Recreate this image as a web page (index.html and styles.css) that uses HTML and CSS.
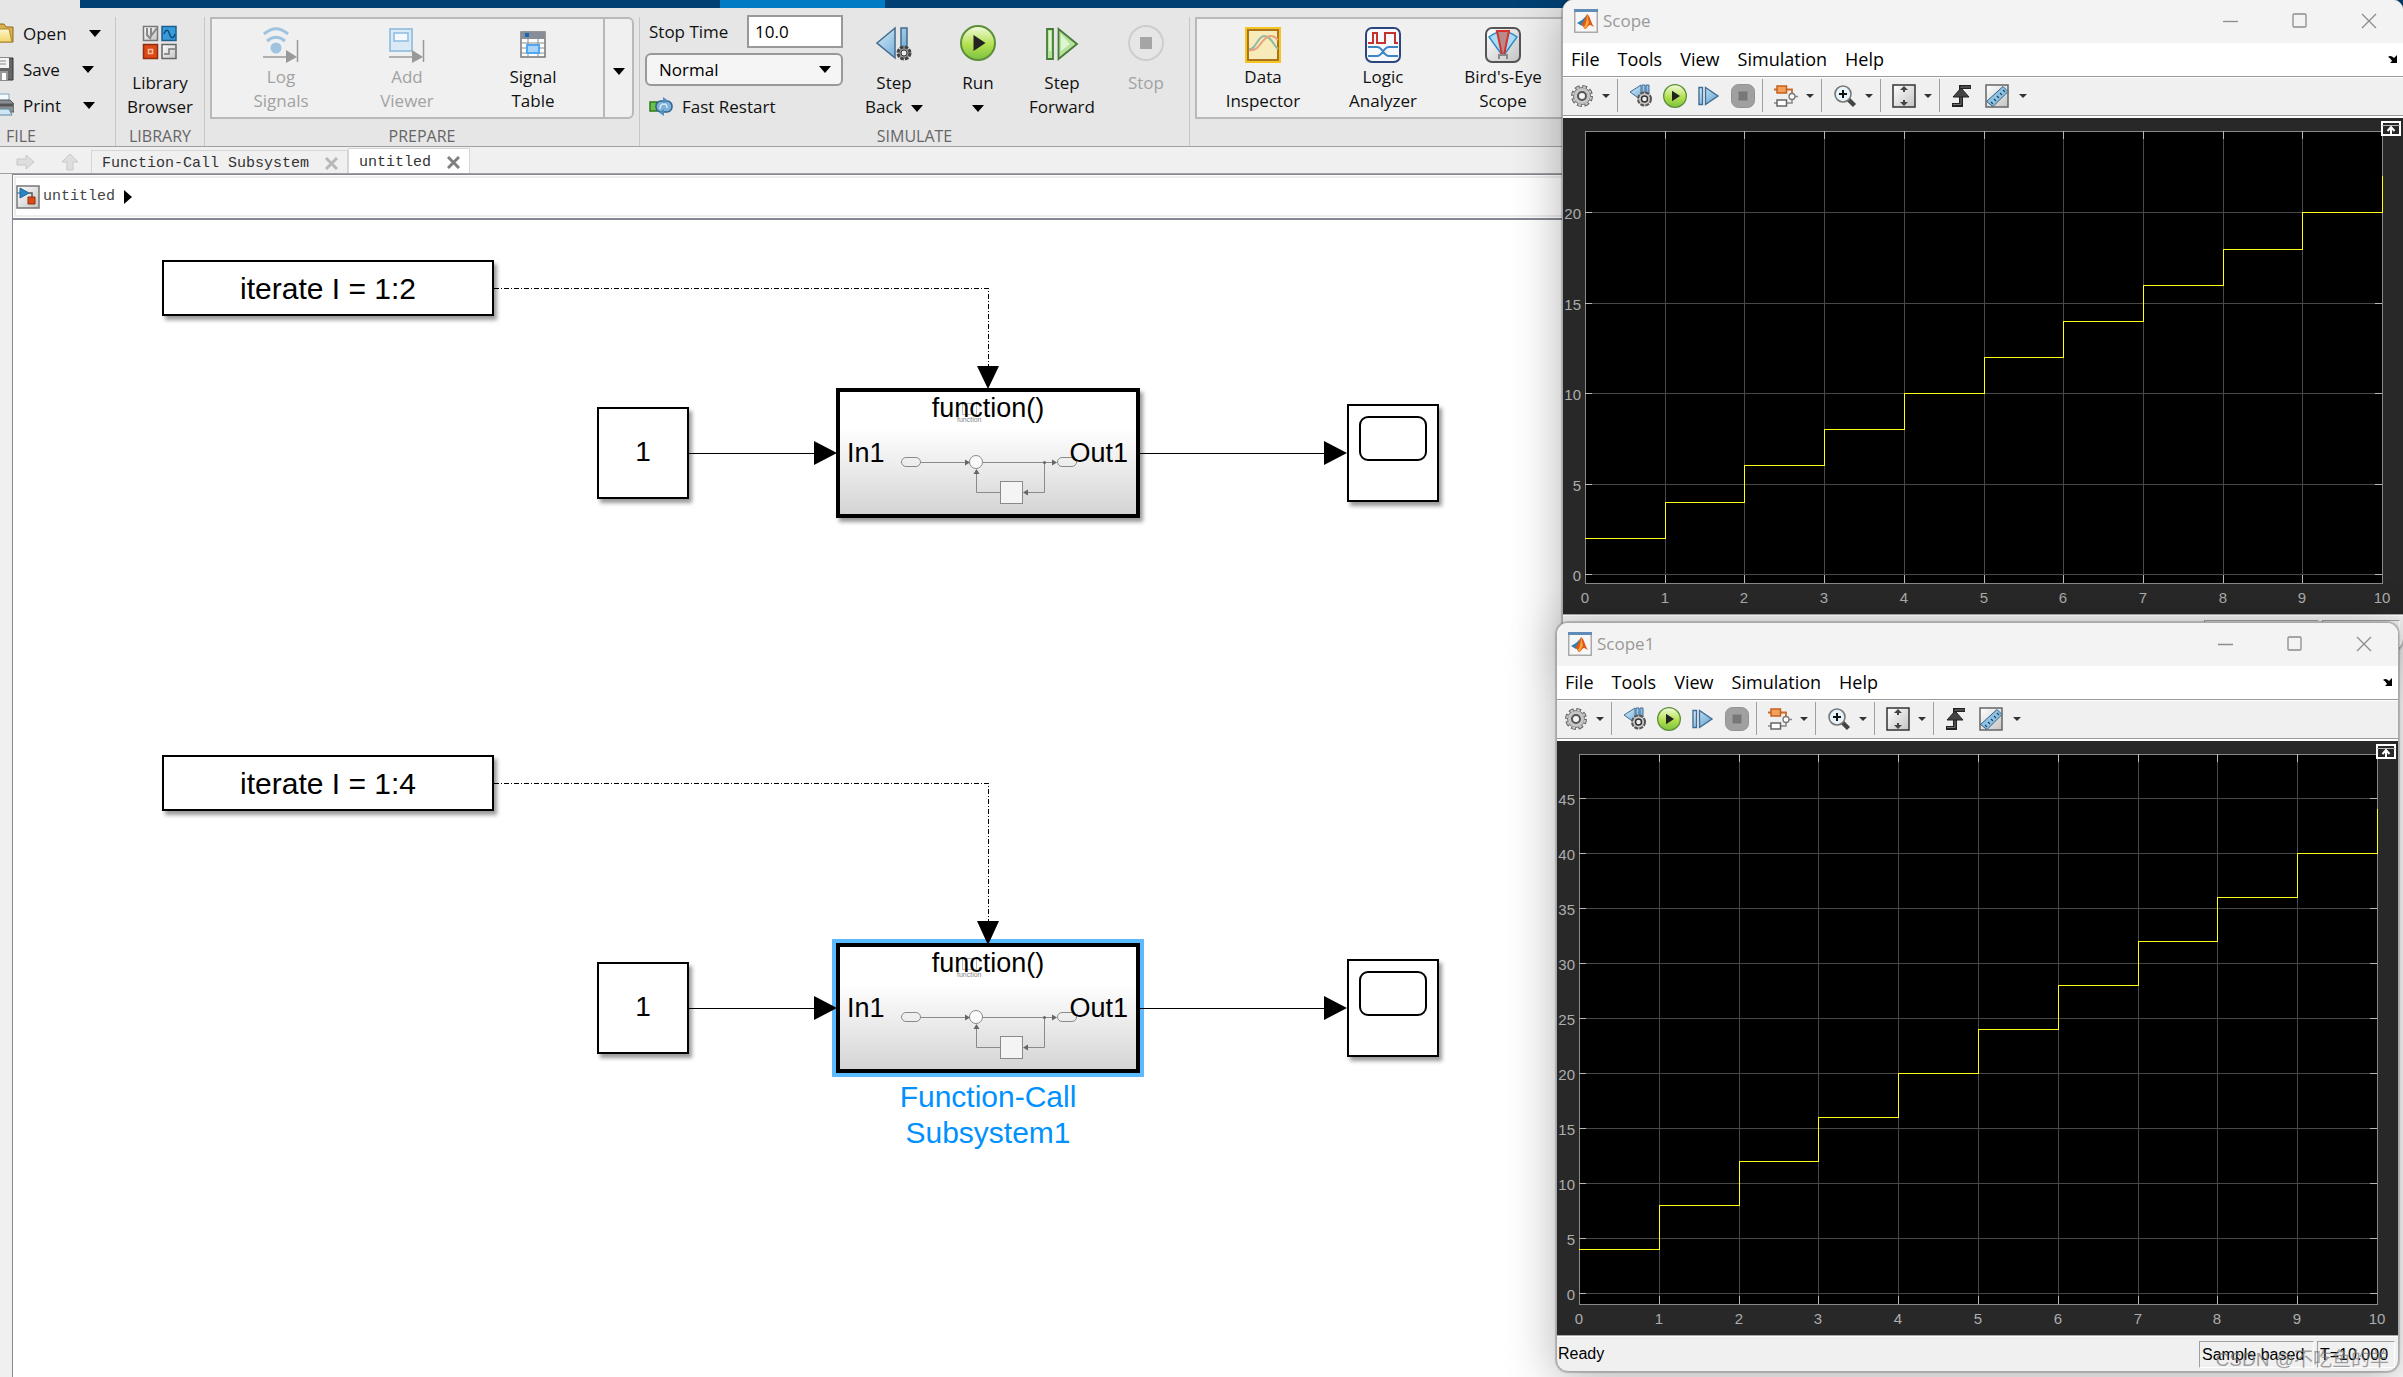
FILE: index.html
```html
<!DOCTYPE html>
<html lang="en">
<head>
    <meta charset="UTF-8">
    <meta name="viewport" content="width=device-width, initial-scale=1.0">
    <title>untitled - Simulink</title>
    <link rel="stylesheet" href="styles.css">
</head>
<body>
    <!-- Shared icons -->
    <svg class="icon-defs" width="0" height="0" aria-hidden="true">
        <defs>
            <linearGradient id="g-green" x1="0" y1="0" x2="0" y2="1"><stop offset="0" stop-color="#f2fbe0"/><stop offset=".55" stop-color="#b4e04e"/><stop offset="1" stop-color="#7cc242"/></linearGradient>
            <linearGradient id="g-blue" x1="0" y1="0" x2="1" y2="1"><stop offset="0" stop-color="#d6ecfa"/><stop offset="1" stop-color="#5b9fd0"/></linearGradient>
            <linearGradient id="g-grey" x1="0" y1="0" x2="1" y2="1"><stop offset="0" stop-color="#ffffff"/><stop offset="1" stop-color="#c4c4c4"/></linearGradient>
            <linearGradient id="g-folder" x1="0" y1="0" x2="0" y2="1"><stop offset="0" stop-color="#fff7cf"/><stop offset="1" stop-color="#f3d466"/></linearGradient>
            <symbol id="gear" viewBox="0 0 24 24">
                <circle cx="12" cy="12" r="9.5" fill="none" stroke="#666" stroke-width="3" stroke-dasharray="4.86 2.6"/>
                <circle cx="12" cy="12" r="8.5" fill="#c6c6c6" stroke="#777"/>
                <circle cx="12" cy="12" r="9" fill="none" stroke="#c6c6c6" stroke-width="2" stroke-dasharray="2.6 4.47" stroke-dashoffset="-1"/>
                <circle cx="12" cy="12" r="4" fill="#f4f4f4" stroke="#555" stroke-width="2"/>
            </symbol>
            <symbol id="step-back-small" viewBox="0 0 24 24">
                <path d="M1 8 12 1v15zM13 1h3v10h-3zM17 1h3v9h-3z" fill="url(#g-blue)" stroke="#3f6d94"/>
                <circle cx="15.5" cy="15" r="6.5" fill="#c9c9c9" stroke="#555" stroke-width="2" stroke-dasharray="4 1.1"/>
                <circle cx="15.5" cy="15" r="3" fill="#eee" stroke="#333" stroke-width="1.5"/>
            </symbol>
            <symbol id="run" viewBox="0 0 36 36">
                <circle cx="18" cy="18" r="17" fill="url(#g-green)" stroke="#5d8f3a" stroke-width="2"/>
                <path d="M13.5 10v16l12-8z" fill="#222"/>
            </symbol>
            <symbol id="step-forward-small" viewBox="0 0 24 24">
                <path d="M2 3.5h3.5v17H2zM8.500 3.5v17L21 12z" fill="url(#g-blue)" stroke="#3f6d94" stroke-width="1.4"/>
            </symbol>
            <symbol id="stop-small" viewBox="0 0 24 24">
                <rect x=".5" y=".5" width="23" height="23" rx="7" fill="#a0a0a0" stroke="#929292"/>
                <rect x="7.5" y="7.5" width="9" height="9" fill="#777"/>
            </symbol>
            <symbol id="highlight" viewBox="0 0 24 24">
                <path d="M0 5.5h3M13 5.5h5V9" fill="none" stroke="#c96a2b" stroke-width="1.8"/>
                <path d="M0 19h3M13 19h5v-4M21 12.5h3" fill="none" stroke="#888" stroke-width="1.5"/>
                <rect x="3" y="2" width="9.5" height="7" fill="#f2a15c" stroke="#c65f1c" stroke-width="1.5"/>
                <rect x="3" y="16" width="9.5" height="6" fill="#fff" stroke="#666" stroke-width="1.5"/>
                <circle cx="18" cy="12.5" r="3" fill="#fff" stroke="#777" stroke-width="1.3"/>
            </symbol>
            <symbol id="zoom" viewBox="0 0 24 24">
                <path d="m15 15 6.5 6.5" stroke="#444" stroke-width="4.5"/>
                <circle cx="10" cy="10" r="8" fill="#e8f4fb" stroke="#777" stroke-width="1.6"/>
                <path d="M10 6v8M6 10h8" stroke="#111" stroke-width="2"/>
            </symbol>
            <symbol id="fit" viewBox="0 0 24 24">
                <rect x="1" y="1" width="22" height="22" fill="url(#g-grey)" stroke="#333" stroke-width="1.5"/>
                <path d="M12 3v5M12 21v-5" stroke="#444" stroke-width="2"/>
                <path d="m8 6 4-4 4 4zM8 18l4 4 4-4z" fill="#444"/>
            </symbol>
            <symbol id="trigger" viewBox="0 0 24 24">
                <path d="M1 21h9V3h10" fill="none" stroke="#222" stroke-width="4"/>
                <path d="M2 20.5h8V3h9.5" fill="none" stroke="#777"/>
                <path d="m2 13 8-9 8 9z" fill="#444" stroke="#222"/>
            </symbol>
            <symbol id="measure" viewBox="0 0 24 24">
                <rect x="1" y="1" width="22" height="22" fill="url(#g-grey)" stroke="#666" stroke-width="1.5"/>
                <path d="M1.5 17.5 18 2.500l5 5L8 22.500z" fill="#8ec3e6" stroke="#36607f"/>
                <path d="m8 20-2-2m5-1-2-2m5-1-2-2m5-1-2-2m5-1-2-2" stroke="#23465f" stroke-width="1.2"/>
            </symbol>
            <symbol id="matlab" viewBox="0 0 24 24">
                <rect x=".75" y=".75" width="22.5" height="22.5" fill="#f7f7f7" stroke="#a9a9a9" stroke-width="1.5"/>
                <path d="M0 0h24v3H0z" fill="#5f8db8"/>
                <path d="m3 14 5-3 5-5-3 10-2 1z" fill="#2a7fb8"/>
                <path d="M13 5c-2 4-3 8-6 10 2 1 3 5 4 5 2 0 3-4 5-4 1 0 2 1 4 2-3-4-4-12-7-13z" fill="#e0561c"/>
                <path d="M13 5c0 5-1 10-3 13l1 2c2-2 3-5 4-6-1-3-1-7-2-9z" fill="#f3a932"/>
            </symbol>
            <symbol id="popout" viewBox="0 0 12 10">
                <path d="M1 3c2-2 4-1 6 1l3-3v8H3l2-2C4 5 3 4 1 3z" fill="#000"/>
            </symbol>
            <symbol id="maximize-axes" viewBox="0 0 20 15">
                <path d="M1 1h18v13H1z" fill="#282828" stroke="#fff" stroke-width="2"/>
                <path d="M1 4.5h18" stroke="#bbb"/>
                <path d="M10 13V7M6.500 10 10 6l3.500 4" fill="none" stroke="#fff" stroke-width="2"/>
            </symbol>
            <!-- Preview of the subsystem contents -->
            <symbol id="subsystem-preview" viewBox="0 0 304 130">
                <g fill="none" stroke="#8a8a8a">
                    <rect x="126.5" y="15.5" width="14" height="11" stroke="#bbb"/>
                    <rect x="65.5" y="69.5" width="19" height="9" rx="4.5"/>
                    <rect x="221.5" y="69.5" width="19" height="9" rx="4.5"/>
                    <circle cx="140" cy="74" r="6.5" fill="#fafafa"/>
                    <path d="M85 74.5h49M147 74.5h70M208.5 74v30.5H190M164 104.5h-23.5V85"/>
                    <rect x="164.5" y="93.5" width="22" height="22" fill="#f4f4f4"/>
                </g>
                <path d="M129 71.5v6l5-3zM216 71.5v6l5-3zM192 101.5v6l-5-3zM137.5 86h6l-3-5z" fill="#666"/>
                <circle cx="208.5" cy="74.5" r="1.5" fill="#666"/>
            </symbol>
        </defs>
    </svg>

    <header class="ribbon">
        <div class="ribbon-tabs"><span class="ribbon-tab-active"></span></div>
        <div class="ribbon-groups">
            <section class="group group-file">
                <div class="group-body file-list">
                    <button class="file-button">
                        <svg width="14" height="24" viewBox="10 0 14 24"><path d="M0 3h14l2 3h7v15H0z" fill="#d9b04a" stroke="#8f6b20"/><path d="M-4 8h23l3 13H0z" fill="url(#g-folder)" stroke="#a98732"/></svg>
                        Open <span class="caret"></span>
                    </button>
                    <button class="file-button">
                        <svg width="14" height="24" viewBox="10 0 14 24"><path d="M0 1h23v22H0z" fill="#666" stroke="#333"/><path d="M2 1h17v10H2z" fill="#f4f4f4"/><path d="M4 4h12M4 7h12" stroke="#888"/><path d="M4 14h14v9H4z" fill="#999"/><path d="M12 16h4v7h-4z" fill="#fff"/></svg>
                        Save <span class="caret"></span>
                    </button>
                    <button class="file-button">
                        <svg width="14" height="24" viewBox="10 0 14 24"><path d="M4 1h15v8H4z" fill="#f3f9fd" stroke="#7fa6c2"/><path d="M0 7h20l4 4v8H0z" fill="#8b8f94" stroke="#555"/><path d="M0 12h23" stroke="#555" stroke-width="3"/><path d="M4 16h15l3 6H0z" fill="#cfe5f4" stroke="#5c86a5"/></svg>
                        Print <span class="caret"></span>
                    </button>
                </div>
                <h2>FILE</h2>
            </section>

            <section class="group group-library">
                <div class="group-body">
                    <button class="tool">
                        <svg width="36" height="36" viewBox="0 0 36 36">
                            <g stroke-width="1.5">
                                <rect x="1.500" y="1.5" width="14" height="14" fill="url(#g-grey)" stroke="#777"/>
                                <rect x="20" y="1.5" width="14" height="14" fill="#3a9bdb" stroke="#1c5f8f"/>
                                <rect x="1.500" y="19.5" width="14" height="14" fill="#dd4a17" stroke="#8f2e0c"/>
                                <rect x="20" y="19.5" width="14" height="14" fill="url(#g-grey)" stroke="#666"/>
                            </g>
                            <path d="M5 3v7l4 4M9 3v8l6-8" fill="none" stroke="#888" stroke-width="2"/>
                            <path d="M22 9c2-5 4-5 5.500 0s4 5 5.500 0" fill="none" stroke="#0c4f7d" stroke-width="1.5"/>
                            <path d="M6.500 24.5h4v4h-4z" fill="none" stroke="#fbbf9d" stroke-width="1.5"/>
                            <path d="M22 29h5v-5h6" fill="none" stroke="#777" stroke-width="1.5"/>
                        </svg>
                        <span>Library<br>Browser</span>
                    </button>
                </div>
                <h2>LIBRARY</h2>
            </section>

            <section class="group group-prepare">
                <div class="group-body">
                    <div class="gallery">
                        <button class="tool" disabled>
                            <svg width="36" height="36" viewBox="0 0 36 36"><path d="M1 7c8-7 16-7 24 0M4 14c6-5 12-5 18 0" fill="none" stroke="#9fc4e0" stroke-width="3"/><circle cx="13" cy="21" r="5.5" fill="#9fc4e0"/><path d="M0 30h28M34.5 13v22" stroke="#999" stroke-width="1.5"/><path d="m23 23 11 7-11 6z" fill="#999"/></svg>
                            <span>Log<br>Signals</span>
                        </button>
                        <button class="tool" disabled>
                            <svg width="36" height="36" viewBox="0 0 36 36"><path d="M1 2h22v22H1z" fill="#d9e9f5" stroke="#9fc4e0" stroke-width="2"/><path d="M5 6h14v8H5z" fill="#f4f9fd" stroke="#8dbce0" stroke-width="1.5"/><path d="M0 30h28M34.5 13v22" stroke="#999" stroke-width="1.5"/><path d="m23 23 11 7-11 6z" fill="#999"/></svg>
                            <span>Add<br>Viewer</span>
                        </button>
                        <button class="tool">
                            <svg width="36" height="36" viewBox="0 0 36 36"><path d="M6 5h24v25H6z" fill="#fff" stroke="#777" stroke-width="1.5"/><path d="M6 5h24v7H6z" fill="#888e98"/><path d="M6 16h24M6 21h24M6 26h24M13 12v18M23 12v18" stroke="#888"/><path d="M10 6h4v4h-4z" fill="#1767b8"/><path d="M12 18h12v8H12z" fill="#a8d4fa" stroke="#52a6ef" stroke-width="2"/></svg>
                            <span>Signal<br>Table</span>
                        </button>
                        <button class="gallery-more" aria-label="More"><span class="caret"></span></button>
                    </div>
                </div>
                <h2>PREPARE</h2>
            </section>

            <section class="group group-simulate">
                <div class="group-body simulate-body">
                    <div class="sim-settings">
                        <div class="stop-time"><label for="stop-time">Stop Time</label><input id="stop-time" type="text" value="10.0"></div>
                        <div class="mode-select">
                            <select aria-label="Simulation mode"><option>Normal</option></select>
                            <span class="caret"></span>
                        </div>
                        <button class="fast-restart">
                            <svg width="24" height="20" viewBox="0 0 24 20"><path d="M1 5h7v9H1z" fill="#6cc04a" stroke="#2f7a1c" stroke-width="1.5"/><rect x="7" y="4" width="16" height="11" rx="5" fill="#7fb0d8" stroke="#2f628e" stroke-width="1.5"/><path d="M14 0v7l5-3.500zM15 12v7l-5-3.500z" fill="#4f8fc2"/><path d="M11 12c0-4 2-5 4-5s3 1 3 4" fill="none" stroke="#d7eaf8" stroke-width="1.5"/></svg>
                            Fast Restart
                        </button>
                    </div>
                    <button class="tool">
                        <svg width="36" height="36" viewBox="0 0 36 36"><path d="M1 18 19 3v30zM25 3h6v21h-6z" fill="url(#g-blue)" stroke="#44698a" stroke-width="1.5"/><circle cx="28" cy="28" r="6" fill="#999" stroke="#444" stroke-width="3" stroke-dasharray="3.5 1.2"/><circle cx="28" cy="28" r="3" fill="#eee" stroke="#333"/></svg>
                        <span>Step<br>Back <i class="caret caret-inline"></i></span>
                    </button>
                    <button class="tool">
                        <svg width="36" height="36"><use href="#run"/></svg>
                        <span>Run<br><i class="caret caret-below"></i></span>
                    </button>
                    <button class="tool">
                        <svg width="36" height="36" viewBox="0 0 36 36"><path d="M3 4h6v30H3zM14.5 4v30L33 19z" fill="#b5e29a" stroke="#477a39" stroke-width="1.8"/><path d="M5 6h2v20H5zM17 9v17l9-7z" fill="#dff5d2"/></svg>
                        <span>Step<br>Forward</span>
                    </button>
                    <button class="tool" disabled>
                        <svg width="36" height="36" viewBox="0 0 36 36"><circle cx="18" cy="18" r="17" fill="#e6e6e6" stroke="#cdcdcd" stroke-width="2"/><path d="M12 12h12v12H12z" fill="#a5a5a5"/></svg>
                        <span>Stop</span>
                    </button>
                </div>
                <h2>SIMULATE</h2>
            </section>

            <section class="group group-review">
                <div class="group-body">
                    <div class="gallery">
                        <button class="tool">
                            <svg width="36" height="36" viewBox="0 0 36 36"><path d="M1 1h34v34H1z" fill="#f7ebba" stroke="#f7c523" stroke-width="2"/><path d="M3 3h30v30H3z" fill="none" stroke="#a9741f" stroke-width="2"/><path d="M4 22c6 2 9-13 15-13 7 0 9 9 14 13" fill="none" stroke="#8fb9a5" stroke-width="2"/><path d="M4 23c12 2 12-14 22-14 4 0 5 2 7 4" fill="none" stroke="#e8a27c" stroke-width="2"/></svg>
                            <span>Data<br>Inspector</span>
                        </button>
                        <button class="tool">
                            <svg width="36" height="36" viewBox="0 0 36 36"><rect x="1" y="1" width="34" height="34" rx="6" fill="#f7f9fc" stroke="#2c477f" stroke-width="2"/><path d="M3 16h5V6h4v10h8V6h10v10h3" fill="none" stroke="#c8322c" stroke-width="2"/><path d="M3 20h9c6 0 6 9 12 9h9M3 29h9c6 0 6-9 12-9h9" fill="none" stroke="#3c84c4" stroke-width="2"/></svg>
                            <span>Logic<br>Analyzer</span>
                        </button>
                        <button class="tool">
                            <svg width="36" height="36" viewBox="0 0 36 36"><rect x="1" y="1" width="34" height="34" rx="6" fill="url(#g-grey)" stroke="#555" stroke-width="2"/><path d="M4 10c9-7 19-7 28 0L19 28h-2z" fill="#a9dcf6" stroke="#2d8ac4" stroke-width="1.5"/><path d="M12 4h12l-5 24h-2z" fill="#b98a8a" stroke="#d5322b" stroke-width="2"/><path d="M14 32v-4h8v4" fill="none" stroke="#888" stroke-width="2"/></svg>
                            <span>Bird's-Eye<br>Scope</span>
                        </button>
                    </div>
                </div>
            </section>
        </div>
    </header>

    <nav class="model-tabs">
        <button class="nav-arrow" aria-label="Forward" disabled><svg width="20" height="16" viewBox="0 0 20 16"><path d="M1 5h9V1l8 7-8 7v-4H1z" fill="#dedede" stroke="#c8c8c8"/></svg></button>
        <button class="nav-arrow" aria-label="Up" disabled><svg width="18" height="18" viewBox="0 0 18 18"><path d="M6 17V9H1l8-8 8 8h-5v8z" fill="#dedede" stroke="#c8c8c8"/></svg></button>
        <div class="model-tab">
            <a href="#subsystem">Function-Call Subsystem</a>
            <button class="tab-close" aria-label="Close"><svg width="13" height="13" viewBox="0 0 13 13"><path d="m1 1 11 11M12 1 1 12"/></svg></button>
        </div>
        <div class="model-tab active">
            <a href="#untitled">untitled</a>
            <button class="tab-close" aria-label="Close"><svg width="13" height="13" viewBox="0 0 13 13"><path d="m1 1 11 11M12 1 1 12"/></svg></button>
        </div>
    </nav>

    <main class="workspace">
        <div class="model">
            <div class="breadcrumb">
                <svg width="24" height="24" viewBox="0 0 24 24"><path d="M1 1h22v22H1z" fill="url(#g-grey)" stroke="#777" stroke-width="1.5"/><path d="M4 3v10l9-5zM1 8h4" fill="#2a86c4" stroke="#1f6698"/><path d="M13 8h3v4" fill="none" stroke="#555" stroke-width="1.5"/><path d="M12 12h7v7h-7z" fill="#dd4a17" stroke="#8f2e0c"/></svg>
                <a href="#untitled">untitled</a>
                <span class="caret-right"></span>
            </div>
            <div class="canvas">
                <svg class="wires">
                    <g fill="none" stroke="#000" shape-rendering="crispEdges">
                        <path class="call-wire" d="M481 68H975V146"/>
                        <path class="call-wire" d="M481 563H975V701"/>
                        <path d="M676 233H802M1127 233H1312M676 788H802M1127 788H1312"/>
                    </g>
                    <path d="M964 146h22l-11 23zM964 701h22l-11 24zM801 221v24l23-12zM1311 221v24l23-12zM801 776v24l23-12zM1311 776v24l23-12z"/>
                </svg>

                <div class="block iterator top-iterator">iterate I = 1:2</div>
                <div class="block constant top-constant">1</div>
                <div class="block subsystem top-subsystem">
                    <svg class="preview"><use href="#subsystem-preview"/></svg>
                    <span class="preview-name">function</span>
                    <span class="port-call">function()</span>
                    <span class="port-in">In1</span>
                    <span class="port-out">Out1</span>
                </div>
                <div class="block scope-block top-scope"><span class="screen"></span></div>

                <div class="block iterator bottom-iterator">iterate I = 1:4</div>
                <div class="block constant bottom-constant">1</div>
                <div class="block subsystem bottom-subsystem selected">
                    <svg class="preview"><use href="#subsystem-preview"/></svg>
                    <span class="preview-name">function</span>
                    <span class="port-call">function()</span>
                    <span class="port-in">In1</span>
                    <span class="port-out">Out1</span>
                </div>
                <div class="block-name">Function-Call<br>Subsystem1</div>
                <div class="block scope-block bottom-scope"><span class="screen"></span></div>
            </div>
        </div>
    </main>

    <section class="window window-scope">
        <div class="title-bar">
            <svg width="24" height="24"><use href="#matlab"/></svg>
            <h1>Scope</h1>
            <button aria-label="Minimize"><svg width="16" height="16" viewBox="0 0 16 16"><path d="M0 8.5h15"/></svg></button>
            <button aria-label="Maximize"><svg width="16" height="16" viewBox="0 0 16 16"><rect x="1" y="1" width="13" height="13" rx="1"/></svg></button>
            <button aria-label="Close"><svg width="16" height="16" viewBox="0 0 16 16"><path d="m1 1 14 14M15 1 1 15"/></svg></button>
        </div>
        <div class="menu-bar">
            <a href="#file">File</a><a href="#tools">Tools</a><a href="#view">View</a><a href="#simulation">Simulation</a><a href="#help">Help</a>
            <svg width="12" height="10"><use href="#popout"/></svg>
        </div>
        <div class="toolbar">
            <div class="tools"><button aria-label="Configuration"><svg><use href="#gear"/></svg></button><span class="caret small"></span></div>
            <div class="tools sim">
                <button aria-label="Step back"><svg><use href="#step-back-small"/></svg></button>
                <button aria-label="Run"><svg><use href="#run"/></svg></button>
                <button aria-label="Step forward"><svg><use href="#step-forward-small"/></svg></button>
                <button aria-label="Stop"><svg><use href="#stop-small"/></svg></button>
            </div>
            <div class="tools"><button aria-label="Highlight block"><svg><use href="#highlight"/></svg></button><span class="caret small"></span></div>
            <div class="tools"><button aria-label="Zoom"><svg><use href="#zoom"/></svg></button><span class="caret small"></span></div>
            <div class="tools"><button aria-label="Scale axes"><svg><use href="#fit"/></svg></button><span class="caret small"></span></div>
            <div class="tools"><button aria-label="Triggers"><svg><use href="#trigger"/></svg></button><button aria-label="Measurements"><svg><use href="#measure"/></svg></button><span class="caret small"></span></div>
        </div>
        <div class="plot-panel">
            <svg class="plot" data-gain="2" data-min="-0.5" data-max="24.5"></svg>
            <button class="maximize-axes" aria-label="Maximize axes"><svg width="20" height="15"><use href="#maximize-axes"/></svg></button>
        </div>
        <div class="status-bar"><span class="status-cell mode-cell"></span><span class="status-cell"></span></div>
    </section>

    <section class="window window-scope1">
        <div class="title-bar">
            <svg width="24" height="24"><use href="#matlab"/></svg>
            <h1>Scope1</h1>
            <button aria-label="Minimize"><svg width="16" height="16" viewBox="0 0 16 16"><path d="M0 8.5h15"/></svg></button>
            <button aria-label="Maximize"><svg width="16" height="16" viewBox="0 0 16 16"><rect x="1" y="1" width="13" height="13" rx="1"/></svg></button>
            <button aria-label="Close"><svg width="16" height="16" viewBox="0 0 16 16"><path d="m1 1 14 14M15 1 1 15"/></svg></button>
        </div>
        <div class="menu-bar">
            <a href="#file">File</a><a href="#tools">Tools</a><a href="#view">View</a><a href="#simulation">Simulation</a><a href="#help">Help</a>
            <svg width="12" height="10"><use href="#popout"/></svg>
        </div>
        <div class="toolbar">
            <div class="tools"><button aria-label="Configuration"><svg><use href="#gear"/></svg></button><span class="caret small"></span></div>
            <div class="tools sim">
                <button aria-label="Step back"><svg><use href="#step-back-small"/></svg></button>
                <button aria-label="Run"><svg><use href="#run"/></svg></button>
                <button aria-label="Step forward"><svg><use href="#step-forward-small"/></svg></button>
                <button aria-label="Stop"><svg><use href="#stop-small"/></svg></button>
            </div>
            <div class="tools"><button aria-label="Highlight block"><svg><use href="#highlight"/></svg></button><span class="caret small"></span></div>
            <div class="tools"><button aria-label="Zoom"><svg><use href="#zoom"/></svg></button><span class="caret small"></span></div>
            <div class="tools"><button aria-label="Scale axes"><svg><use href="#fit"/></svg></button><span class="caret small"></span></div>
            <div class="tools"><button aria-label="Triggers"><svg><use href="#trigger"/></svg></button><button aria-label="Measurements"><svg><use href="#measure"/></svg></button><span class="caret small"></span></div>
        </div>
        <div class="plot-panel">
            <svg class="plot" data-gain="4" data-min="-1" data-max="49"></svg>
            <button class="maximize-axes" aria-label="Maximize axes"><svg width="20" height="15"><use href="#maximize-axes"/></svg></button>
        </div>
        <div class="status-bar"><span class="status-text">Ready</span><span class="status-cell mode-cell">Sample based</span><span class="status-cell">T=10.000</span></div>
    </section>

    <div class="watermark">CSDN @不吃鱼的羊</div>

    <script src="script.js"></script>
</body>
</html>
```
FILE: styles.css
```css
* {
    box-sizing: border-box;
}

body {
    margin: 0;
    height: 100vh;
    display: flex;
    flex-direction: column;
    position: relative;
    overflow: hidden;
    background-color: #f0f0f0;
    font-family: "Open Sans", "Noto Sans", sans-serif;
    font-size: 17px;
    color: #111;
}

button {
    font: inherit;
    color: inherit;
    background: none;
    border: none;
    padding: 0;
}

a {
    color: inherit;
    text-decoration: none;
}

svg {
    display: block;
    flex-shrink: 0;
}

.icon-defs {
    position: absolute;
}

.caret {
    display: inline-block;
    flex-shrink: 0;
    border-left: 6px solid transparent;
    border-right: 6px solid transparent;
    border-top: 7px solid #000;
}

.caret.small {
    border-width: 4px 4px 0;
    border-top-color: #333;
}

.caret-inline {
    margin-left: 4px;
    vertical-align: middle;
}

.caret-below {
    vertical-align: middle;
}

/* Ribbon */
.ribbon {
    background-color: #e6e6e6;
    border-bottom: 1px solid #a0a0a0;
}

.ribbon-tabs {
    height: 8px;
    margin-left: 80px;
    background-color: #004072;
    display: flex;
    padding-left: 640px;
}

.ribbon-tab-active {
    width: 165px;
    background-color: #007cc5;
}

.ribbon-groups {
    display: flex;
    height: 138px;
    padding-top: 9px;
}

.group {
    display: flex;
    flex-direction: column;
    flex-shrink: 0;
    border-right: 1px solid #c6c6c6;
}

.group-body {
    display: flex;
    flex-shrink: 0;
    height: 102px;
}

.group h2 {
    flex-shrink: 0;
    margin: 5px 0 0;
    font-size: 16px;
    font-weight: normal;
    line-height: 24px;
    text-align: center;
    color: #666;
}

.group-file {
    width: 116px;
}

.group-file h2 {
    text-align: left;
    padding-left: 6px;
}

.group-library {
    width: 89px;
}

.group-prepare {
    width: 435px;
    padding: 0 5px;
}

.group-simulate {
    width: 550px;
}

.group-review {
    flex-grow: 1;
    padding-left: 5px;
    border-right: none;
}

.file-list {
    flex-direction: column;
    gap: 4px;
}

.file-button {
    display: flex;
    flex-shrink: 0;
    align-items: center;
    gap: 9px;
    height: 32px;
}

.file-button .caret {
    margin-left: 13px;
}

.tool {
    width: 84px;
    display: flex;
    flex-direction: column;
    align-items: center;
    gap: 10px;
    padding-top: 8px;
    line-height: 24px;
}

.tool:disabled {
    color: #a2a2a2;
}

.group-library .tool {
    width: 100%;
}

.gallery {
    flex: 1;
    display: flex;
    padding-left: 6px;
    background-color: #f0f0f0;
    border: 2px solid #b9b9b9;
    border-radius: 0 6px 6px 0;
}

.gallery .tool {
    width: 126px;
    gap: 2px;
}

.group-review .tool {
    width: 120px;
}

.gallery-more {
    margin-left: auto;
    width: 29px;
    border-left: 2px solid #b9b9b9;
}

.sim-settings {
    width: 212px;
    padding: 0 9px 0 5px;
    margin-top: -2px;
}

.stop-time {
    display: flex;
    align-items: center;
    justify-content: space-between;
    padding-left: 4px;
}

.stop-time input {
    width: 96px;
    height: 33px;
    border: 2px solid #999;
    padding: 0 6px;
    font: inherit;
}

.mode-select {
    position: relative;
    margin: 5px 0;
}

.mode-select select {
    appearance: none;
    width: 100%;
    height: 33px;
    padding: 0 12px;
    border: 2px solid #999;
    border-radius: 6px;
    background-color: #f5f5f5;
    font: inherit;
}

.mode-select .caret {
    position: absolute;
    right: 12px;
    top: 13px;
    pointer-events: none;
}

.fast-restart {
    display: flex;
    align-items: center;
    gap: 9px;
    height: 31px;
    padding-left: 4px;
}

/* Model tabs and breadcrumb */
.model-tabs {
    display: flex;
    align-items: flex-end;
    height: 27px;
    border-bottom: 1px solid #a0a0a0;
    padding-left: 16px;
    font-family: "Liberation Mono", monospace;
    font-size: 15px;
    color: #333;
}

.nav-arrow {
    width: 37px;
    height: 22px;
}

.nav-arrow + .nav-arrow {
    margin-left: 8px;
    width: 30px;
}

.model-tab {
    display: flex;
    align-items: center;
    gap: 16px;
    height: 23px;
    padding: 2px 9px 0 10px;
    border: 1px solid #d6d6d6;
    border-bottom: none;
}

.model-tab.active {
    height: 25px;
    background-color: #fff;
}

.tab-close svg {
    stroke: #b8b8b8;
    stroke-width: 3;
}

.active .tab-close svg {
    stroke: #808080;
}

.workspace {
    flex: 1;
    display: flex;
    padding-left: 12px;
}

.model {
    flex: 1;
    display: flex;
    flex-direction: column;
    background-color: #fff;
    border-left: 1px solid #838892;
}

.breadcrumb {
    display: flex;
    align-items: center;
    gap: 3px;
    height: 46px;
    border-top: 1px solid #838892;
    border-bottom: 2px solid #838892;
    padding-left: 3px;
    box-shadow: inset 0 0 0 1px #fff, inset 0 0 0 3px #eee;
    font-family: "Liberation Mono", monospace;
    font-size: 15px;
    color: #444;
}

.caret-right {
    margin-left: 6px;
    border-left: 8px solid #000;
    border-top: 7px solid transparent;
    border-bottom: 7px solid transparent;
}

/* Diagram */
.canvas {
    flex: 1;
    position: relative;
    font-family: "Liberation Sans", Arial, sans-serif;
    color: #000;
}

.wires {
    position: absolute;
    z-index: 1;
    width: 100%;
    height: 100%;
    pointer-events: none;
}

.call-wire {
    stroke-dasharray: 5 2 1 2;
}

.block {
    position: absolute;
    background-color: #fff;
    border: 2px solid #000;
    box-shadow: 3px 4px 4px rgba(0, 0, 0, 0.4);
}

.iterator {
    left: 149px;
    width: 332px;
    height: 56px;
    line-height: 53px;
    font-size: 30px;
    text-align: center;
}

.constant {
    left: 584px;
    width: 92px;
    height: 92px;
    line-height: 85px;
    font-size: 28px;
    text-align: center;
}

.subsystem {
    left: 823px;
    width: 304px;
    height: 130px;
    border-width: 4px;
    background: linear-gradient(#fff 30%, #d4d4d4);
    font-size: 27px;
    line-height: 32px;
}

.subsystem span,
.preview {
    position: absolute;
}

.preview {
    left: -4px;
    top: -4px;
    width: 304px;
    height: 130px;
}

.selected {
    box-shadow: 0 0 0 4px #5cbaff;
}

.port-call {
    left: 0;
    right: 0;
    top: 0;
    text-align: center;
}

.port-in {
    left: 7px;
    top: 45px;
}

.port-out {
    right: 8px;
    top: 45px;
}

.subsystem .preview-name {
    left: 117px;
    top: 24px;
    font-size: 7px;
    line-height: 8px;
    color: #888;
}

.scope-block {
    left: 1334px;
    width: 92px;
    height: 98px;
    padding: 10px 10px 0;
}

.screen {
    display: block;
    height: 45px;
    border: 2px solid #000;
    border-radius: 9px;
}

.top-iterator { top: 40px; }
.top-constant { top: 187px; }
.top-subsystem { top: 168px; }
.top-scope { top: 184px; }
.bottom-iterator { top: 535px; }
.bottom-constant { top: 742px; }
.bottom-subsystem { top: 723px; }
.bottom-scope { top: 739px; }

.block-name {
    position: absolute;
    left: 823px;
    top: 859px;
    width: 304px;
    font-size: 30px;
    line-height: 36px;
    text-align: center;
    color: #0091ff;
}

/* Scope windows */
.window {
    position: absolute;
    z-index: 2;
    display: flex;
    flex-direction: column;
    overflow: hidden;
    background-color: #f0f0f0;
    border: 1px solid #a8a8a8;
    border-radius: 12px;
    box-shadow: 0 8px 50px rgba(0, 0, 0, 0.3), 0 0 1px 1px rgba(0, 0, 0, 0.2);
}

.window-scope {
    left: 1562px;
    right: -1px;
    top: -1px;
    height: 652px;
}

.window-scope1 {
    left: 1556px;
    right: 4px;
    top: 622px;
    bottom: 5px;
}

.title-bar {
    display: flex;
    align-items: center;
    height: 43px;
    padding-left: 11px;
    padding-bottom: 2px;
    background-color: #f3f3f3;
}

.title-bar h1 {
    flex: 1;
    margin: 0 0 0 5px;
    font-size: 17px;
    font-weight: normal;
    color: #999;
}

.title-bar button {
    width: 69px;
    display: flex;
    justify-content: center;
}

.title-bar button svg {
    fill: none;
    stroke: #8c8c8c;
    stroke-width: 1.3;
}

.menu-bar {
    display: flex;
    align-items: center;
    gap: 18px;
    height: 34px;
    padding: 0 4px 2px 8px;
    background-color: #fff;
    border-bottom: 1px solid #999;
    font-size: 18px;
    color: #000;
}

.menu-bar svg {
    margin-left: auto;
}

.toolbar {
    display: flex;
    align-items: center;
    height: 39px;
    padding-bottom: 1px;
    border-bottom: 1px solid #999;
    box-shadow: inset 0 1px #fff;
}

.tools {
    display: flex;
    align-items: center;
    gap: 8px;
    height: 33px;
    padding: 0 7px 0 11px;
    border-right: 1px solid #a0a0a0;
}

.tools.sim {
    gap: 10px;
}

.tools:first-child {
    padding-left: 7px;
}

.tools:last-child {
    gap: 10px;
    border-right: none;
}

.tools svg {
    width: 24px;
    height: 24px;
}

.plot-panel {
    flex: 1;
    position: relative;
    background-color: #282828;
    border-top: 2px solid #fff;
    min-height: 0;
}

.plot {
    width: 100%;
    height: 100%;
    font-family: "Liberation Sans", Arial, sans-serif;
    font-size: 15px;
    fill: #adadad;
}

.plot .area {
    fill: #000;
    stroke: #8a8a8a;
}

.plot .grid {
    stroke: #484848;
}

.plot .tick {
    stroke: #b8b8b8;
}

.plot .signal {
    fill: none;
    stroke: #ffff11;
}

.maximize-axes {
    position: absolute;
    right: 2px;
    top: 3px;
}

.status-bar {
    display: flex;
    gap: 3px;
    height: 36px;
    padding: 5px 3px 3px 1px;
    border-top: 1px solid #a8a8a8;
    box-shadow: inset 0 1px #fff;
    font-family: "Liberation Sans", Arial, sans-serif;
    font-size: 16px;
    line-height: 26px;
    color: #000;
}

.status-cell {
    width: 78px;
    border: 1px solid #fff;
    border-top-color: #a0a0a0;
    border-left-color: #a0a0a0;
    padding-left: 2px;
}

.mode-cell {
    width: 115px;
    margin-left: auto;
}

.watermark {
    position: absolute;
    z-index: 3;
    right: 14px;
    bottom: 4px;
    font-family: "Liberation Sans", "Noto Sans CJK SC", sans-serif;
    font-size: 19px;
    line-height: 26px;
    color: rgba(120, 120, 120, 0.7);
}
```
FILE: script.js
```javascript
const pad = { left: 22, right: 21, top: 13, bottom: 31 };
const NS = 'http://www.w3.org/2000/svg';

function add(svg, name, className, attrs) {
    const el = document.createElementNS(NS, name);
    if (className) el.setAttribute('class', className);
    for (const key in attrs) el.setAttribute(key, attrs[key]);
    svg.appendChild(el);
    return el;
}

function drawPlot(svg) {
    const gain = Number(svg.dataset.gain);
    const min = Number(svg.dataset.min);
    const max = Number(svg.dataset.max);
    const w = svg.clientWidth;
    const h = svg.clientHeight;
    const right = w - pad.right;
    const bottom = h - pad.bottom;
    const x = t => Math.round(pad.left + t / 10 * (right - pad.left));
    const y = v => Math.round(bottom - (v - min) / (max - min) * (bottom - pad.top));

    svg.innerHTML = '';
    svg.setAttribute('shape-rendering', 'crispEdges');
    add(svg, 'rect', 'area', { x: pad.left, y: pad.top, width: right - pad.left, height: bottom - pad.top });

    for (let t = 0; t <= 10; t++) {
        if (t > 0 && t < 10) {
            add(svg, 'path', 'grid', { d: `M${x(t)} ${pad.top}V${bottom}` });
            add(svg, 'path', 'tick', { d: `M${x(t)} ${pad.top}v8M${x(t)} ${bottom}v-8` });
        }
        add(svg, 'text', '', { x: x(t), y: bottom + 20, 'text-anchor': 'middle' }).textContent = t;
    }
    for (let v = 0; v < max; v += 5) {
        add(svg, 'path', 'grid', { d: `M${pad.left} ${y(v)}H${right}` });
        add(svg, 'path', 'tick', { d: `M${pad.left} ${y(v)}h7M${right} ${y(v)}h-7` });
        add(svg, 'text', '', { x: pad.left - 4, y: y(v) + 7, 'text-anchor': 'end' }).textContent = v;
    }

    // the accumulator steps once per second
    let d = `M${x(0)} ${y(gain)}`;
    for (let t = 1; t <= 10; t++) {
        d += `H${x(t)}V${y(gain * (t + 1))}`;
    }
    add(svg, 'path', 'signal', { d: d });
}

function drawAll() {
    document.querySelectorAll('.plot').forEach(drawPlot);
}

drawAll();
window.addEventListener('resize', drawAll);
```
